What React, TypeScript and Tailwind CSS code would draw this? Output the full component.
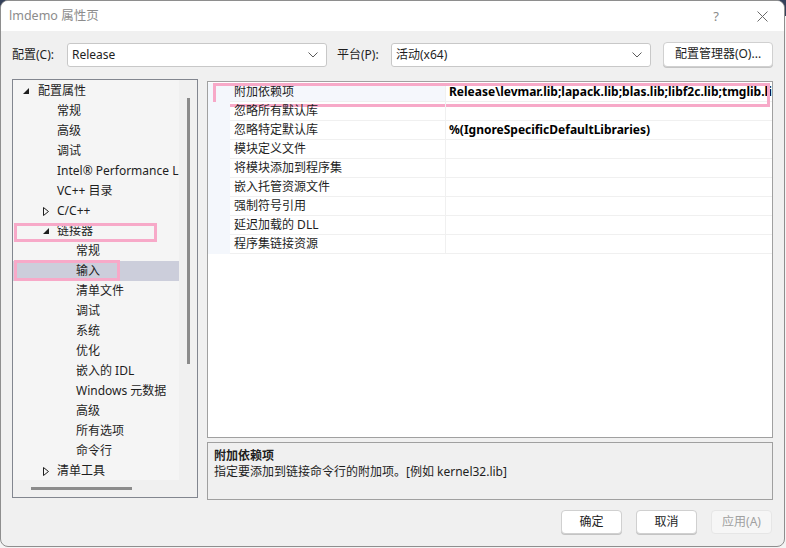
import React from 'react'

const font = "font-['Noto_Sans','Noto_Sans_CJK_SC',sans-serif]"

type TreeRow = { label: string; level: number; arrow?: 'open' | 'closed'; selected?: boolean; mark?: 'linker' | 'input' }

const treeRows: TreeRow[] = [
  { label: '配置属性', level: 0, arrow: 'open' },
  { label: '常规', level: 1 },
  { label: '高级', level: 1 },
  { label: '调试', level: 1 },
  { label: 'Intel® Performance Libraries', level: 1 },
  { label: 'VC++ 目录', level: 1 },
  { label: 'C/C++', level: 1, arrow: 'closed' },
  { label: '链接器', level: 1, arrow: 'open', mark: 'linker' },
  { label: '常规', level: 2 },
  { label: '输入', level: 2, selected: true, mark: 'input' },
  { label: '清单文件', level: 2 },
  { label: '调试', level: 2 },
  { label: '系统', level: 2 },
  { label: '优化', level: 2 },
  { label: '嵌入的 IDL', level: 2 },
  { label: 'Windows 元数据', level: 2 },
  { label: '高级', level: 2 },
  { label: '所有选项', level: 2 },
  { label: '命令行', level: 2 },
  { label: '清单工具', level: 1, arrow: 'closed' },
]

const props: { name: string; value?: string }[] = [
  { name: '附加依赖项', value: 'Release\\levmar.lib;lapack.lib;blas.lib;libf2c.lib;tmglib.lib;%(AdditionalDependencies)' },
  { name: '忽略所有默认库' },
  { name: '忽略特定默认库', value: '%(IgnoreSpecificDefaultLibraries)' },
  { name: '模块定义文件' },
  { name: '将模块添加到程序集' },
  { name: '嵌入托管资源文件' },
  { name: '强制符号引用' },
  { name: '延迟加载的 DLL' },
  { name: '程序集链接资源' },
]

function Chevron() {
  return (
    <svg width="10" height="6" viewBox="0 0 10 6" className="shrink-0">
      <path d="M0.5 0.5 L5 5 L9.5 0.5" fill="none" stroke="#5a5a5a" strokeWidth="1" />
    </svg>
  )
}

function Arrow({ kind }: { kind: 'open' | 'closed' }) {
  if (kind === 'open') {
    return (
      <svg width="6" height="6" viewBox="0 0 6 6">
        <path d="M6 0 L6 6 L0 6 Z" fill="#1e1e1e" />
      </svg>
    )
  }
  return (
    <svg width="6" height="9" viewBox="0 0 6 9">
      <path d="M0.5 0.5 L5.5 4.5 L0.5 8.5 Z" fill="none" stroke="#1e1e1e" strokeWidth="1" />
    </svg>
  )
}

function Combo({ text, width }: { text: string; width: string }) {
  return (
    <div className={`${width} h-[24px] bg-white border border-[#c8c8c8] rounded-[3px] flex items-center pl-[4px] pr-[8px]`}>
      <span className="flex-1 text-[#1e1e1e]">{text}</span>
      <Chevron />
    </div>
  )
}

function Button({ text, disabled }: { text: string; disabled?: boolean }) {
  return (
    <div
      className={
        disabled
          ? 'w-[61px] h-[24px] rounded-[4px] border border-[#e6e6e6] bg-[#f6f6f6] text-[#a0a0a0] flex items-center justify-center'
          : 'w-[61px] h-[24px] rounded-[4px] border border-[#d0d0d0] bg-white text-[#1e1e1e] flex items-center justify-center shadow-[0_1px_0_#c4c4c4]'
      }
    >
      {text}
    </div>
  )
}

export default function App() {
  return (
    <div className={`${font} text-[12px] leading-none w-[786px] h-[548px] bg-[linear-gradient(to_bottom,#34405a_0,#34405a_16px,#f4f4f4_16px)]`}>
      <div className="w-[785px] h-[547px] rounded-[8px] border border-[#8e8e8e] bg-[#f0f0f0] overflow-hidden flex flex-col">
        {/* title bar */}
        <div className="h-[30px] bg-white flex items-center pl-[8px] pr-[16px] shrink-0">
          <span className="flex-1 text-[#8c8c8c] text-[12.5px]">lmdemo 属性页</span>
          <span className="text-[#8a8a8a] text-[13px] mr-[38px]">?</span>
          <svg width="11" height="11" viewBox="0 0 11 11">
            <path d="M0.5 0.5 L10.5 10.5 M10.5 0.5 L0.5 10.5" stroke="#6a6a6a" strokeWidth="1" />
          </svg>
        </div>

        {/* configuration row */}
        <div className="flex items-center mt-[12px] h-[24px] pl-[11px]">
          <span className="w-[55px] text-[#1e1e1e]">配置(C):</span>
          <Combo text="Release" width="w-[260px]" />
          <span className="ml-[10px] w-[54px] text-[#1e1e1e]">平台(P):</span>
          <Combo text="活动(x64)" width="w-[260px]" />
          <div className="ml-[12px] w-[110px] h-[25px] -mt-[2px] rounded-[4px] border border-[#d0d0d0] bg-white flex items-center justify-center text-[#1e1e1e] shadow-[0_1px_0_#c4c4c4]">
            配置管理器(O)...
          </div>
        </div>

        {/* main panels */}
        <div className="flex mt-[12px] pl-[11px]">
          {/* tree */}
          <div className="w-[186px] h-[419px] border border-[#82868f] grid grid-cols-[166px_18px] grid-rows-[400px_17px] shrink-0">
            <div className="bg-[#f5f5f5] overflow-hidden pt-[1px]">
              {treeRows.map((r, i) => (
                <div
                  key={i}
                  className={`relative h-[20px] flex items-center whitespace-nowrap text-[#1e1e1e] ${r.selected ? 'bg-[#cccedb]' : ''}`}
                >
                  <div
                    className={`flex items-center justify-center w-[8px] shrink-0 ${
                      r.level === 0 ? 'ml-[9px] mr-[8px]' : 'ml-[29px] mr-[7px]'
                    }`}
                  >
                    {r.arrow && <Arrow kind={r.arrow} />}
                  </div>
                  <span className={r.level === 2 ? 'ml-[19px]' : ''}>{r.label}</span>
                  {r.mark === 'linker' && (
                    <div className="absolute left-[1px] top-[2px] w-[143px] h-[19px] border-[3px] border-[#f7a9c8]" />
                  )}
                  {r.mark === 'input' && (
                    <div className="absolute left-[1px] -top-[1px] w-[106px] h-[21px] border-[3px] border-[#f7a9c8]" />
                  )}
                </div>
              ))}
            </div>
            <div className="flex justify-center pt-[18px]">
              <div className="w-[3px] h-[266px] bg-[#8b8b8b] ml-[1px]" />
            </div>
            <div className="flex items-center pl-[18px]">
              <div className="w-[101px] h-[3px] bg-[#8b8b8b]" />
            </div>
            <div />
          </div>

          {/* right column */}
          <div className="ml-[9px] w-[566px] flex flex-col">
            <div className="mt-[2px] h-[357px] border border-[#a0a0a0] bg-white pt-[1px] overflow-hidden">
              {props.map((p, i) => (
                <div key={i} className="relative h-[19px] flex">
                  <div className="w-[22px] bg-[#f4f7fc] shrink-0" />
                  <div className={`w-[215px] shrink-0 flex items-center pl-[4px] border-b border-[#f0f0f0] text-[#1e1e1e] ${i === 0 ? 'bg-[#f5f7fc]' : ''}`}>
                    {p.name}
                  </div>
                  <div className="flex-1 flex items-center pl-[3px] border-b border-l border-[#f0f0f0] font-bold text-black whitespace-nowrap overflow-hidden">
                    {p.value}
                  </div>
                  {i === 0 && (
                    <div className="absolute left-[5px] top-0 w-[557px] h-[24px] border-[3px] border-[#f7a9c8]" />
                  )}
                </div>
              ))}
            </div>
            <div className="mt-[4px] h-[58px] border border-[#a0a0a0] bg-[#f0f0f0] px-[6px] pt-[5px] text-[#1e1e1e]">
              <div className="font-bold h-[16px] flex items-center">附加依赖项</div>
              <div className="h-[16px] flex items-center">指定要添加到链接命令行的附加项。[例如 kernel32.lib]</div>
            </div>
          </div>
        </div>

        {/* buttons */}
        <div className="flex justify-end gap-[14px] pr-[12px] mt-[10px]">
          <Button text="确定" />
          <Button text="取消" />
          <Button text="应用(A)" disabled />
        </div>
      </div>
    </div>
  )
}
